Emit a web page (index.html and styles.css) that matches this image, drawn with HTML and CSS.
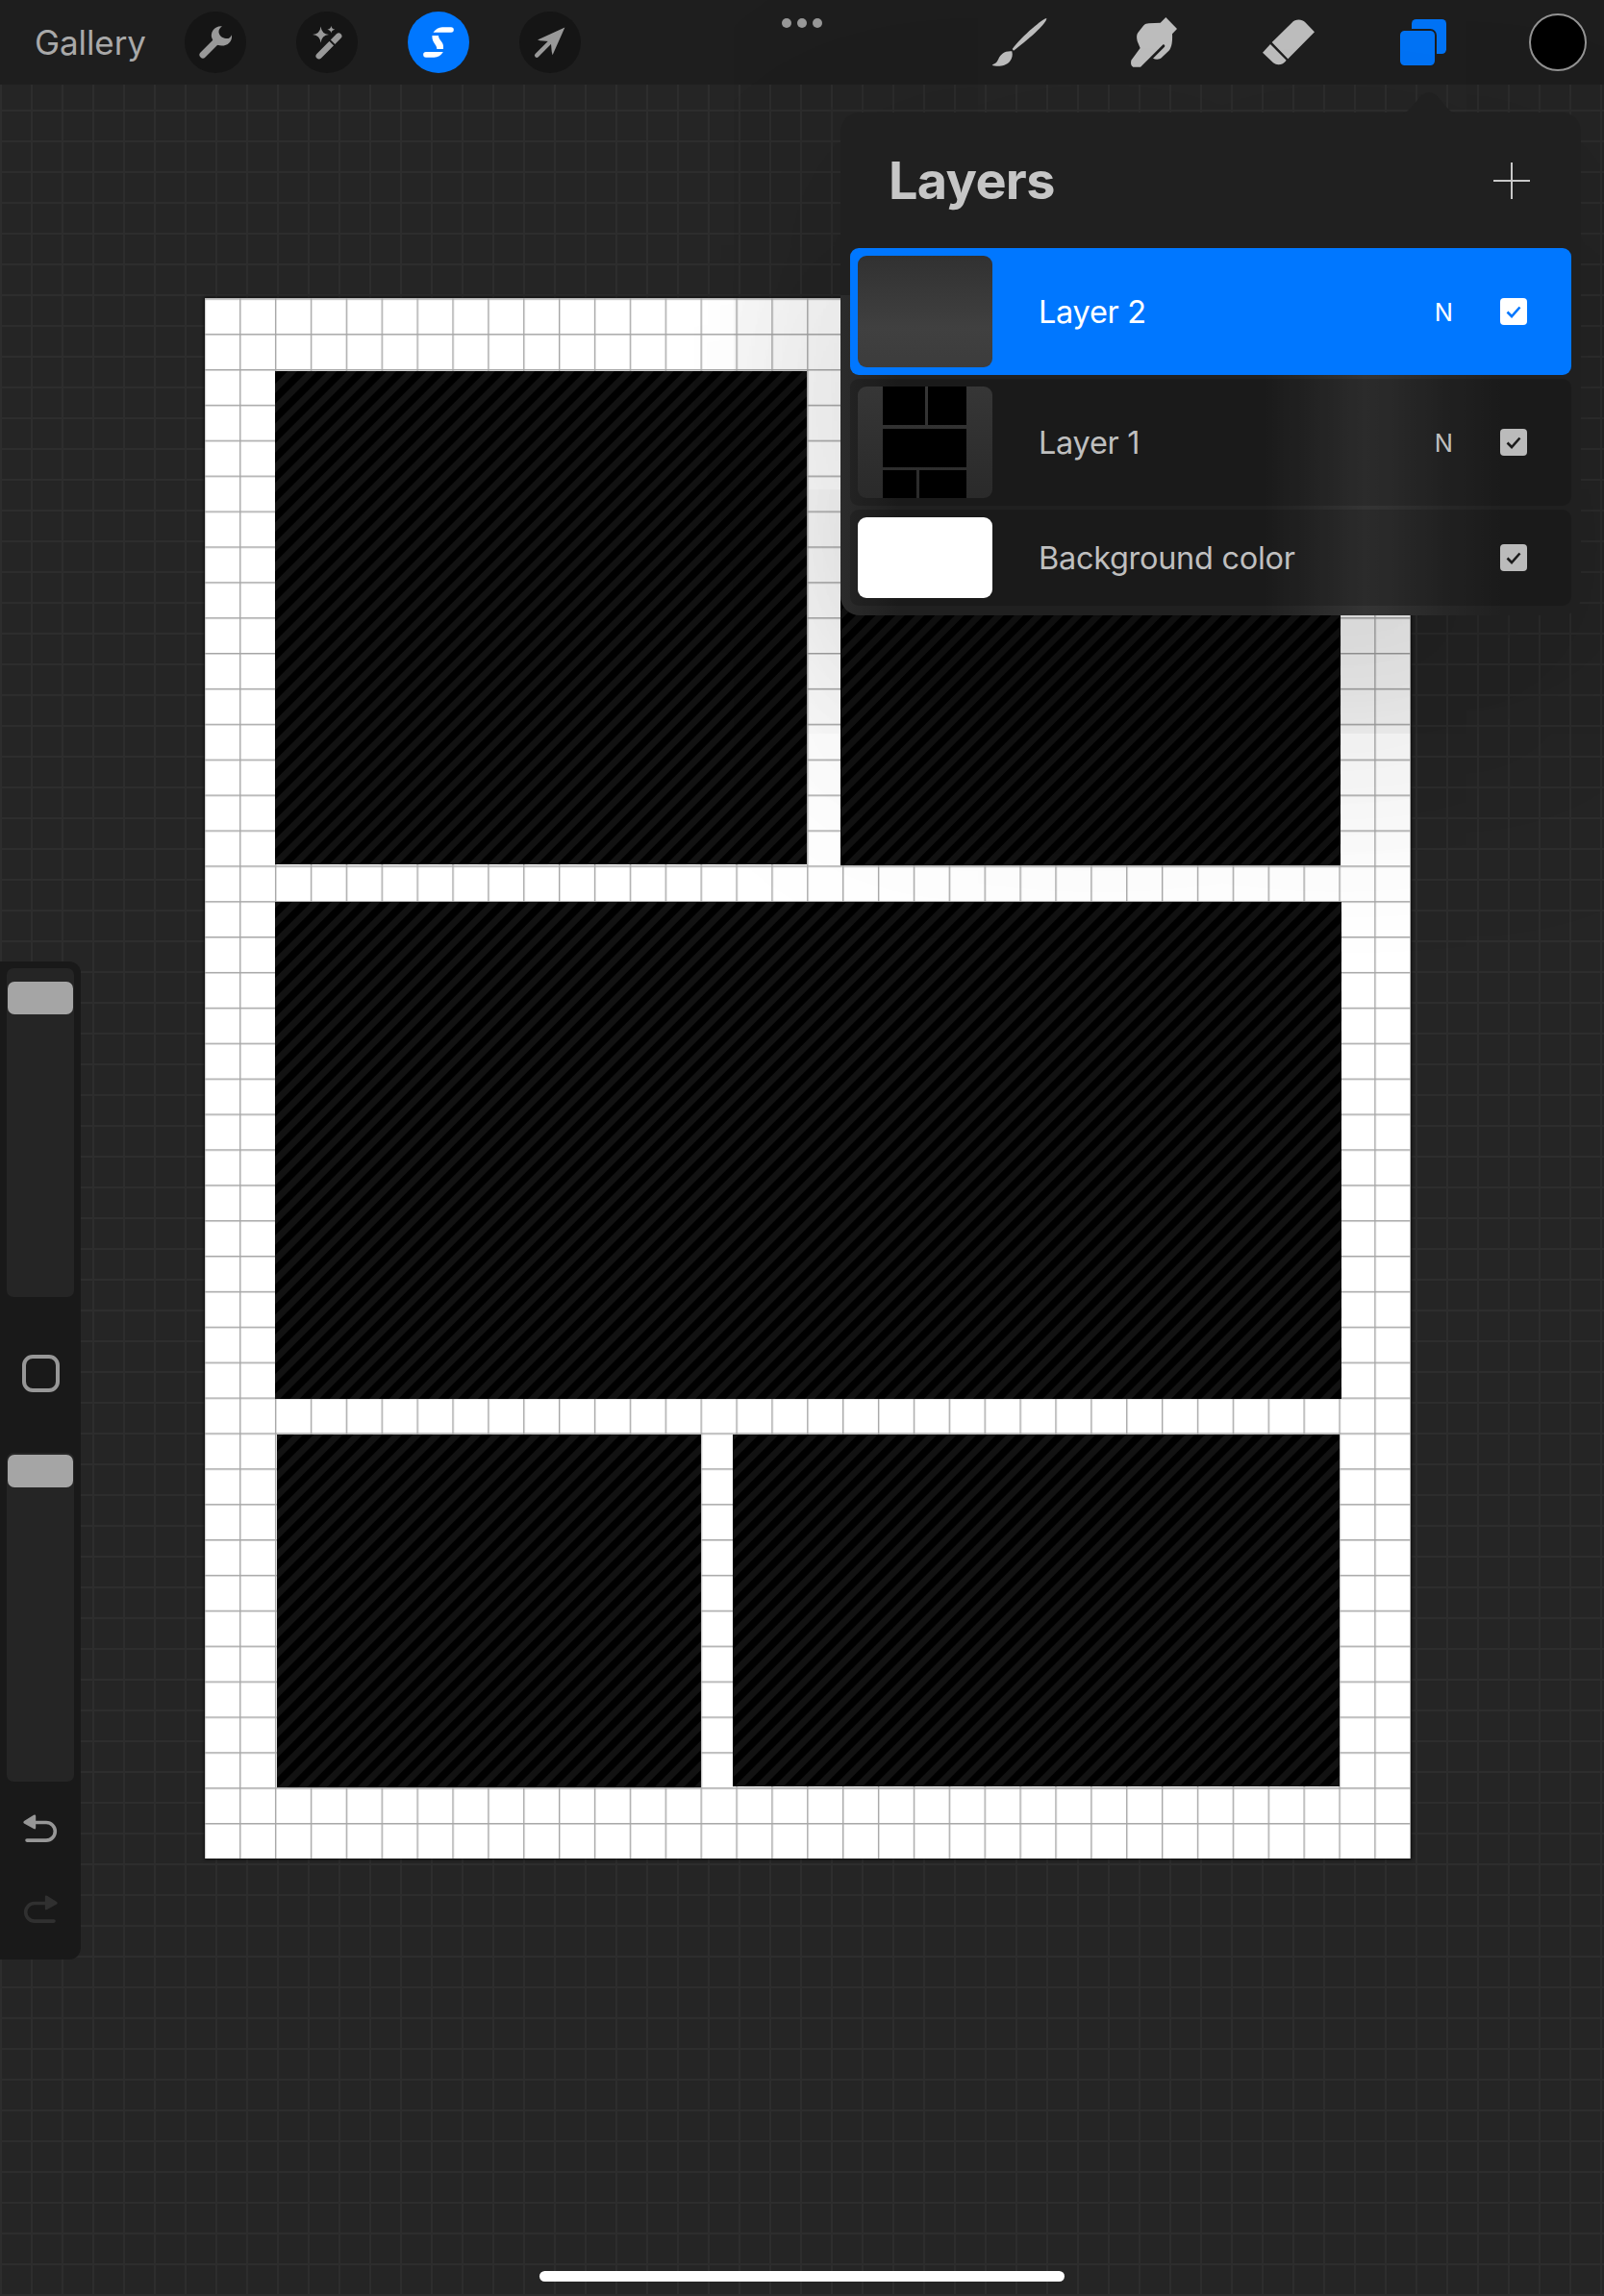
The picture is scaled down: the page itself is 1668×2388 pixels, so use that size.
FILE: index.html
```html
<!DOCTYPE html>
<html lang="en">
<head>
  <meta charset="UTF-8" />
  <meta name="viewport" content="width=device-width, initial-scale=1.0"/>
  <title>Canvas - Layers</title>
  <link rel="stylesheet" href="styles.css">
</head>
<body>
  <div class="topbar">
    <span class="gallery">Gallery</span>
    <div class="tools">
      <button class="round-btn" aria-label="Actions">
        <svg viewBox="0 0 64 64">
          <path d="M19 45 L33 31" stroke="currentColor" stroke-width="7" stroke-linecap="round"/>
          <path fill="currentColor" d="M38.9 15.2 C31 14.5 26 22 28.5 28 L30 31 L34 34.8 C42 37.5 50 33 49 24.2 C47.5 27.5 45.5 28.5 43 28 C39 27.5 36 25 35.5 21.5 C35.3 19 36.5 17 38.9 15.2Z"/>
        </svg>
      </button>
      <button class="round-btn" aria-label="Adjustments">
        <svg viewBox="0 0 64 64">
          <path d="M23.7 46.2 L44.2 25.6" stroke="currentColor" stroke-width="6.4" stroke-linecap="round"/>
          <path d="M34 29 L41 36" stroke="#151515" stroke-width="1.8"/>
          <path fill="currentColor" d="M25.6 15.5 Q26.4 23.3 34 24 Q26.4 24.8 25.6 32.5 Q24.8 24.8 17 24 Q24.8 23.3 25.6 15.5Z"/>
          <path fill="currentColor" d="M36.4 14.8 Q36.8 18.3 40.4 18.7 Q36.8 19.1 36.4 22.6 Q36 19.1 32.4 18.7 Q36 18.3 36.4 14.8Z"/>
        </svg>
      </button>
      <button class="round-btn active" aria-label="Selection">
        <svg viewBox="0 0 64 64">
          <path fill="currentColor" d="M26.5 21.8 C29 18.3 32 16.2 36 16.2 H45 A2.8 2.8 0 0 1 45 21.8Z"/>
          <path fill="currentColor" d="M25.4 25 H32 C32 29.5 37 31.5 37 36 V38.9 H30.3 C30.3 34 25 33 25.4 25Z"/>
          <path fill="currentColor" d="M36.8 42 C34.5 45.7 31.5 47.7 27.5 47.7 H19 A2.8 2.8 0 0 1 19 42Z"/>
        </svg>
      </button>
      <button class="round-btn" aria-label="Transform">
        <svg viewBox="0 0 64 64">
          <path fill="currentColor" d="M47.4 16.6 L19 29.6 C22 30.8 27 30.6 30.5 31 L33 33.8 C33.6 37.5 33.2 41.5 34.6 45.2Z"/>
          <path d="M18.2 45.6 L34 29.8" stroke="currentColor" stroke-width="4.4" stroke-linecap="round"/>
        </svg>
      </button>
    </div>
    <div class="dots"><i></i><i></i><i></i></div>
    <div class="brushes">
      <svg viewBox="30 42 180 180">
        <path d="M205 57 C196 56 130 110 98 153 L102 158 C142 128 206 74 205 57Z"/>
        <path d="M97 160 C75 158 62 168 55 184 C50 196 44 199 35 203 C45 208 75 210 90 192 C98 182 100 172 97 160Z"/>
      </svg>
      <svg viewBox="450 42 180 180">
        <path d="M577 54 L612 90 L597 106 C598 130 596 145 588 157 L566 178 C556 188 545 186 537 182 L573 146 C576 141 571 137 567 140 L498 209 H475 C468 205 467 198 469 188 L497 150 L488 128 C485 115 486 108 490 102 L507 80 C512 75 518 73 524 73 L560 71Z"/>
      </svg>
      <svg viewBox="870 42 180 180">
        <path d="M908 132 L970 71 C980 60 1000 58 1012 70 L1041 100 L958 184Z"/>
        <path d="M903 138 L953 188 C942 203 925 206 912 196 L879 164Z"/>
      </svg>
      <svg class="blue" viewBox="1290 42 180 180">
        <rect x="1344" y="60" width="108" height="108" rx="14"/>
        <rect x="1305" y="93" width="114" height="114" rx="17" stroke="#1e1e1e" stroke-width="6"/>
      </svg>
      <span class="color"></span>
    </div>
  </div>

  <div class="workspace">
    <svg class="canvas" width="1254" height="1623" viewBox="213 310 1254 1623">
      <defs>
        <pattern id="grid" x="212.2" y="310.2" width="36.88" height="36.88" patternUnits="userSpaceOnUse">
          <path d="M0 .7 H36.88 M.7 0 V36.88" stroke="#a6a6a6" stroke-width="1.4"/>
        </pattern>
        <linearGradient id="hatch" gradientUnits="userSpaceOnUse" spreadMethod="repeat" x1="302" y1="450" x2="312.3" y2="460.3">
          <stop offset=".2" stop-color="#121212"/>
          <stop offset=".27" stop-color="#000"/>
          <stop offset=".73" stop-color="#000"/>
          <stop offset=".8" stop-color="#121212"/>
        </linearGradient>
      </defs>
      <rect x="213" y="310" width="1254" height="1623" fill="#fff"/>
      <rect x="213" y="310" width="1254" height="1623" fill="url(#grid)"/>
      <g fill="url(#hatch)">
        <rect x="286" y="386" width="553" height="513"/>
        <rect x="874" y="386" width="520" height="514"/>
        <rect x="286" y="938" width="1109" height="517"/>
        <rect x="288" y="1492" width="441" height="367"/>
        <rect x="762" y="1492" width="631" height="366"/>
      </g>
    </svg>

    <div class="sidebar">
      <div class="slider size"><span class="handle"></span></div>
      <button class="modify" aria-label="Modify"></button>
      <div class="slider opacity"><span class="handle"></span></div>
      <svg class="undo" viewBox="0 0 36 30">
        <path d="M12 8.5 H24 A9.3 9.3 0 0 1 24 27.1 H4" fill="none" stroke="currentColor" stroke-width="3.6" stroke-linecap="round"/>
        <path d="M1 7 L11 .8 Q13.2 0 13.2 2 V14 Q13.2 16.2 11 15 L1 9.6 Q-.3 8.3 1 7Z" fill="currentColor"/>
      </svg>
      <svg class="undo redo" viewBox="0 0 36 30">
        <path d="M12 8.5 H24 A9.3 9.3 0 0 1 24 27.1 H4" fill="none" stroke="currentColor" stroke-width="3.6" stroke-linecap="round"/>
        <path d="M1 7 L11 .8 Q13.2 0 13.2 2 V14 Q13.2 16.2 11 15 L1 9.6 Q-.3 8.3 1 7Z" fill="currentColor"/>
      </svg>
    </div>

    <div class="layers">
      <svg class="arrow" viewBox="0 0 54 22"><path d="M0 22 C6 21 16 6 20 2.5 Q27 -2 34 2.5 C38 6 48 21 54 22Z" fill="#202020"/></svg>
      <div class="layers-head">
        <h1>Layers</h1>
        <svg viewBox="0 0 38 38"><path d="M19 0 V38 M0 19 H38" stroke="#c8c8c8" stroke-width="2"/></svg>
      </div>
      <div class="layer selected">
        <div class="thumb"></div>
        <span class="name">Layer 2</span>
        <span class="mode">N</span>
        <svg class="check" viewBox="0 0 28 28"><rect width="28" height="28" rx="4"/><path d="M7.5 14.5 L12 19 L20.5 9.5"/></svg>
      </div>
      <div class="layer">
        <div class="thumb">
          <svg viewBox="0 0 140 116">
            <rect x="26" y="0" width="44" height="40"/>
            <rect x="73" y="0" width="40" height="40"/>
            <rect x="26" y="44" width="87" height="40"/>
            <rect x="26" y="87" width="35" height="29"/>
            <rect x="64" y="87" width="49" height="29"/>
          </svg>
        </div>
        <span class="name">Layer 1</span>
        <span class="mode">N</span>
        <svg class="check" viewBox="0 0 28 28"><rect width="28" height="28" rx="4"/><path d="M7.5 14.5 L12 19 L20.5 9.5"/></svg>
      </div>
      <div class="layer background">
        <div class="thumb"></div>
        <span class="name">Background color</span>
        <svg class="check" viewBox="0 0 28 28"><rect width="28" height="28" rx="4"/><path d="M7.5 14.5 L12 19 L20.5 9.5"/></svg>
      </div>
    </div>

    <div class="home"></div>
  </div>
</body>
</html>
```
FILE: styles.css
```css
* {
  box-sizing: border-box;
}

body {
  margin: 0;
  font-family: Inter, 'Liberation Sans', sans-serif;
  background-color: #252525;
  color: #bfbfbf;
  overflow: hidden;
}

button {
  padding: 0;
  border: none;
}

.topbar {
  position: relative;
  height: 88px;
  background-color: #1e1e1e;
  display: flex;
  align-items: center;
  padding: 0 18px 0 36px;
}

.gallery {
  width: 156px;
  font-size: 35px;
  letter-spacing: -0.1px;
  color: #a9a9a9;
}

.tools {
  display: flex;
  gap: 52px;
}

.round-btn {
  width: 64px;
  height: 64px;
  border-radius: 50%;
  background-color: #151515;
  color: #999;
}

.round-btn svg {
  display: block;
  fill: none;
}

.round-btn.active {
  background-color: #0077ff;
  color: white;
}

.dots {
  position: absolute;
  left: 813px;
  top: 19px;
  display: flex;
  gap: 6px;
}

.dots i {
  width: 10px;
  height: 10px;
  border-radius: 50%;
  background-color: #999;
}

.brushes {
  margin-left: auto;
  display: flex;
  gap: 80px;
}

.brushes svg {
  width: 60px;
  height: 60px;
  fill: #bfbfbf;
}

.brushes .blue {
  fill: #0074f8;
}

.color {
  width: 60px;
  height: 60px;
  border-radius: 50%;
  border: 2px solid #959595;
  background-color: black;
}

.workspace {
  position: relative;
  height: 2300px;
  padding: 222px 0 0 213px;
  background-color: #252525;
  background-image:
    linear-gradient(#2d2d2d 2px, transparent 2px),
    linear-gradient(90deg, #2d2d2d 2px, transparent 2px);
  background-size: 32px 32px;
  background-position: 0 26px;
}

.canvas {
  display: block;
  box-shadow: 0 0 3px 1px #111;
}

/* left sliders */
.sidebar {
  position: absolute;
  left: 0;
  top: 912px;
  width: 84px;
  height: 1038px;
  padding: 7px 0;
  border-radius: 0 12px 12px 0;
  background-color: #191919;
  display: flex;
  flex-direction: column;
  align-items: center;
}

.slider {
  width: 70px;
  height: 342px;
  border-radius: 7px;
  background-color: #252525;
  padding: 14px 1px;
}

.opacity {
  padding-top: 2px;
}

.handle {
  display: block;
  height: 34px;
  border-radius: 7px;
  background-color: #a5a5a5;
}

.modify {
  width: 39px;
  height: 39px;
  margin: 60px 0 63px;
  border: 4px solid #979797;
  border-radius: 11px;
  background: none;
}

.undo {
  width: 36px;
  height: 30px;
  margin-top: 34px;
  color: #979797;
}

.redo {
  margin-top: 54px;
  color: #303030;
  transform: scaleX(-1);
}

/* layers popover */
.layers {
  position: absolute;
  left: 874px;
  top: 29px;
  width: 770px;
  height: 523px;
  padding: 0 10px;
  border-radius: 20px;
  background:
    linear-gradient(90deg, transparent 440px, rgba(255, 255, 255, .03) 480px, rgba(255, 255, 255, .09) 545px, rgba(255, 255, 255, .08) 570px, rgba(255, 255, 255, .03) 630px, transparent 690px) 0 200px no-repeat,
    linear-gradient(90deg, rgba(70, 70, 70, .3), transparent 60px) 0 190px no-repeat,
    #202020;
  box-shadow: 0 40px 250px rgba(0, 0, 0, .14), 0 120px 280px rgba(0, 0, 0, .14);
}

.arrow {
  position: absolute;
  left: 585px;
  top: -21px;
  width: 54px;
  height: 22px;
}

.layers-head {
  height: 141px;
  padding: 0 43px 0 40px;
  display: flex;
  align-items: center;
  justify-content: space-between;
}

.layers-head h1 {
  margin: 0;
  font-size: 54px;
  font-weight: 700;
  letter-spacing: -0.7px;
  color: #c6c6c6;
}

.layers-head svg {
  width: 38px;
  height: 38px;
}

.layer {
  height: 132px;
  margin-bottom: 4px;
  padding: 0 46px 0 8px;
  border-radius: 9px;
  background-color: rgba(0, 0, 0, .16);
  display: flex;
  align-items: center;
}

.layer.selected {
  background-color: #0077ff;
  color: white;
}

.layer.background {
  height: 100px;
}

.thumb {
  width: 140px;
  height: 116px;
  border-radius: 9px;
  background: linear-gradient(#363636, #2a2a2a);
}

.thumb svg {
  display: block;
}

.selected .thumb {
  background: linear-gradient(#313131, #404040 65%, #3c3c3c);
}

.background .thumb {
  height: 84px;
  background: white;
}

.name {
  flex: 1;
  margin-left: 48px;
  font-size: 32.5px;
  letter-spacing: -0.3px;
}

.mode {
  font-size: 25.5px;
  margin-right: 49px;
}

.check {
  width: 28px;
  height: 28px;
}

.check rect {
  fill: #bbb;
}

.check path {
  fill: none;
  stroke: #1c1c1c;
  stroke-width: 2.6;
}

.selected .check rect {
  fill: white;
}

.selected .check path {
  stroke: #0077ff;
}

.home {
  position: absolute;
  left: 561px;
  bottom: 15px;
  width: 546px;
  height: 11px;
  border-radius: 6px;
  background-color: white;
}
```
